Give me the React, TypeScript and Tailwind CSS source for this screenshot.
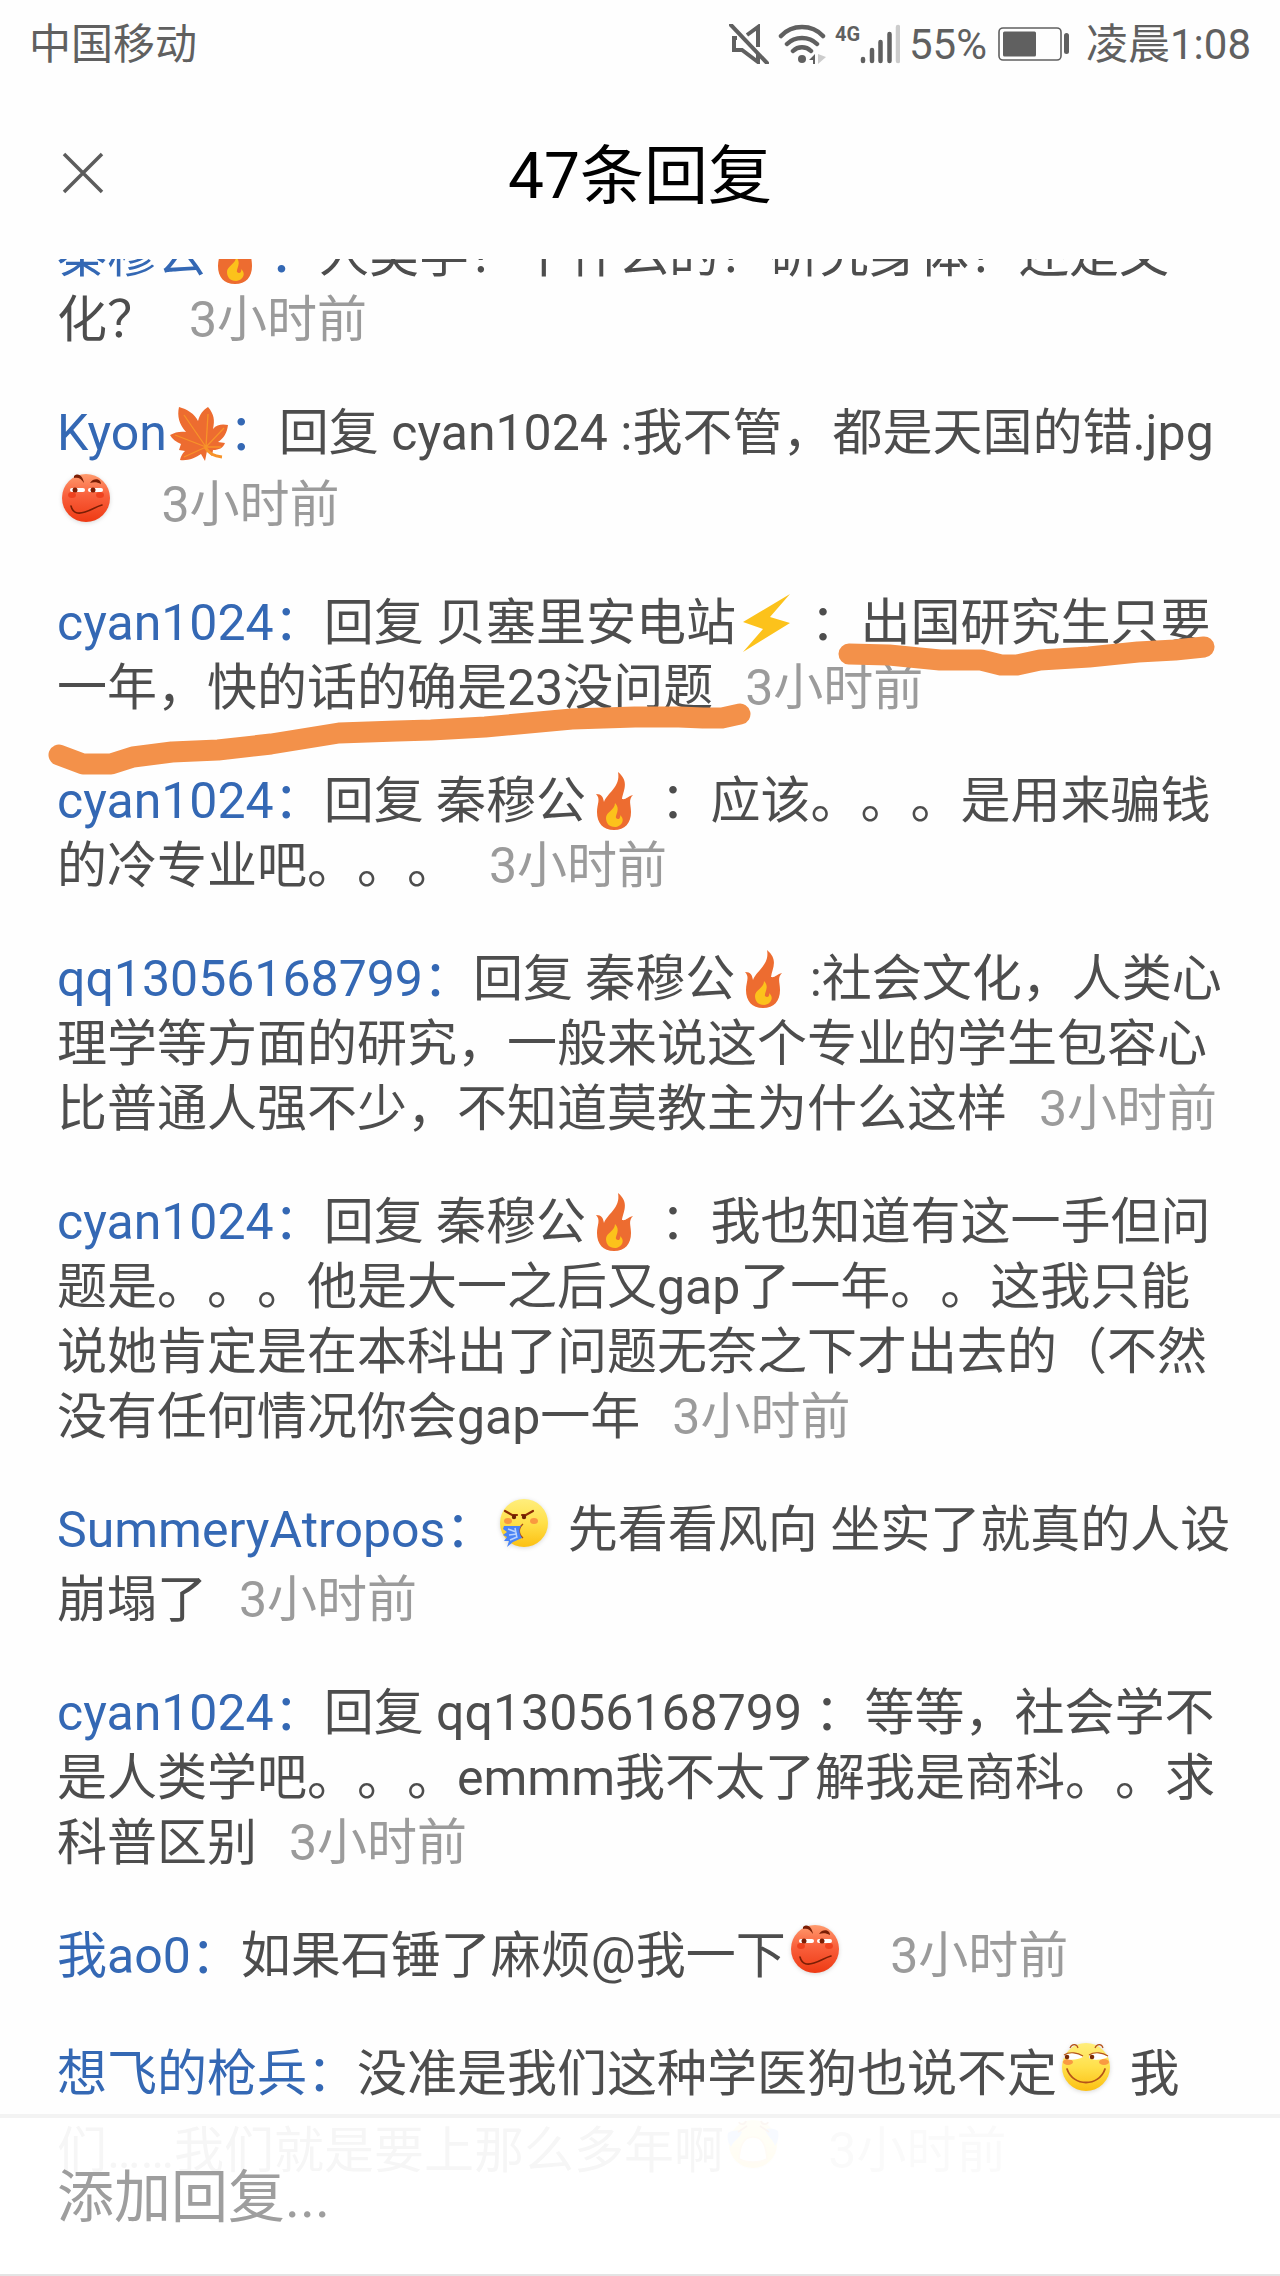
import type { ReactNode } from "react";

const Fire = () => (
  <svg viewBox="0 0 62 58" className="inline-block h-[58px] w-[62px] align-[-12px]" role="img" aria-label="火">
    <path fill="#ed6c30" d="M32 0c12 10 5 19 4 27 4 1 6-3 11-4-5 5-2 9-2 17 0 11-6 18-17 18s-17-7-17-18c0-8 4-13-1-18 6 0 7 3 8 8 3-9 17-15 14-30z" />
    <path fill="#fcc21b" d="M29 31c6 6 0 12 1 15 3 3 5-1 4-3 6 5 1 12-5 12-6 0-9-4-9-9 0-6 9-8 9-15z" />
  </svg>
);

const Bolt = () => (
  <svg viewBox="0 0 62 58" className="inline-block h-[58px] w-[62px] align-[-12px]" role="img" aria-label="闪电">
    <path fill="#fcc21b" d="M54 0 7 28l20 7L7 58l47-29-20-6z" />
  </svg>
);

const Leaf = () => (
  <svg viewBox="0 0 62 58" className="inline-block h-[58px] w-[62px] align-[-12px]" role="img" aria-label="枫叶">
    <path fill="#ed6c30" d="M12 3C20 5 28 10 31 17 33 10 36 6 41 3 47 10 48 16 46 25 50 20 56 20 61 21 60 29 57 34 51 38L58 39C56 44 52 46 46 46L45 52 40 47 38 57 34 50C28 54 21 57 13 56 14 52 15 50 18 47L12 46 14 40C9 38 5 35 3 31 8 28 14 27 19 28 12 20 10 12 12 3z" />
    <path fill="none" stroke="#f79329" strokeWidth="1.3" d="M39 43 17 11M39 43 41 10M39 43 57 24M39 43 8 31M39 43 17 53M39 43h15" />
    <path fill="none" stroke="#f79329" strokeWidth="3" d="M38 43c4 7 9 9 17 10" />
  </svg>
);

type FaceKind = "red" | "spit" | "grin" | "cry";

const faces: Record<FaceKind, ReactNode> = {
  red: (
    <>
      <circle cx="29" cy="25" r="24" fill="url(#redFace)" />
      <path fill="#7a1e05" d="M17 3c5-4 9 1 10 7-3-5-6-6-10-5zM33 10c4-6 11-4 11 1-4-2-7-2-11-1z" />
      <rect x="13" y="15" width="15" height="4" rx="2" fill="#fff" />
      <rect x="31" y="15" width="15" height="4" rx="2" fill="#fff" />
      <circle cx="18" cy="17" r="2.5" fill="#7a1e05" />
      <circle cx="36" cy="17" r="2.5" fill="#7a1e05" />
      <ellipse cx="15" cy="22" rx="4" ry="3" fill="#e93412" opacity=".7" />
      <ellipse cx="43" cy="22" rx="4" ry="3" fill="#e93412" opacity=".7" />
      <path fill="none" stroke="#7a1e05" strokeWidth="1.6" strokeLinecap="round" d="M14 33c2 8 8 8 14 6 7-2 10-5 17-7" />
    </>
  ),
  spit: (
    <>
      <circle cx="29" cy="25" r="24" fill="url(#yellowFace)" />
      <ellipse cx="13" cy="23" rx="4" ry="3" fill="#f77b3a" opacity=".7" />
      <ellipse cx="39" cy="23" rx="4" ry="3" fill="#f77b3a" opacity=".7" />
      <path fill="none" stroke="#8a2c05" strokeWidth="2.2" strokeLinecap="round" d="m10 13 7 4 5 0M38 13l-7 4-4 0" />
      <circle cx="19" cy="19" r="2.2" fill="#6b2205" />
      <circle cx="29" cy="19" r="2.2" fill="#6b2205" />
      <path fill="none" stroke="#a5481b" strokeWidth="1.5" d="M28 26c-5 4-5 10 0 14" />
      <path fill="#4a83f5" d="M9 28h17c-3 4-1 9 1 12l-9 4-6 5 2-6-5 0 3-4-4-2 4-3-4-3z" />
      <path fill="none" stroke="#b9d2fd" strokeWidth="1.5" d="m13 31 8 3M14 37l8-1M15 42l7-3M20 30l2 10" />
    </>
  ),
  grin: (
    <>
      <circle cx="29" cy="25" r="24" fill="url(#yellowFace)" />
      <ellipse cx="11" cy="20" rx="5" ry="3" fill="#f77b3a" opacity=".7" />
      <ellipse cx="47" cy="20" rx="5" ry="3" fill="#f77b3a" opacity=".7" />
      <path fill="#fff" d="M7 14c6-5 14-3 19 1-6 3-13 4-19 1zM32 14c6-5 14-3 19 1-6 3-13 4-19 1z" />
      <path fill="none" stroke="#b5541a" strokeWidth="1.2" d="M13 6c2-5 7-4 8 0M38 6c2-5 7-4 8 0M7 13c6-4 14-2 19 1M32 13c6-4 14-2 19 1" />
      <circle cx="10" cy="15" r="2.3" fill="#7a2c05" />
      <circle cx="35" cy="15" r="2.3" fill="#7a2c05" />
      <path fill="none" stroke="#b5541a" strokeWidth="1.8" strokeLinecap="round" d="M10 27c6 18 32 18 38 0" />
    </>
  ),
  cry: (
    <>
      <circle cx="29" cy="25" r="24" fill="url(#yellowFace)" />
      <path fill="#6ba4f5" d="M4 14c5-3 11-3 14-1-2 6-8 8-11 15-3-4-4-9-3-14zM54 12c-5-3-10-3-13-1 2 6 8 9 10 16 3-4 4-9 3-15z" />
      <path fill="#fff" stroke="#f0a83a" strokeWidth="1.5" d="M29 18c11 0 13 11 14 22-8 4-20 4-28 0 1-11 3-22 14-22z" />
      <path fill="none" stroke="#b5541a" strokeWidth="1.8" d="m14 13 9-6M45 13l-9-6M15 3c1 3 6 3 7-1M44 3c-1 3-6 3-7-1" />
    </>
  ),
};

/* Picture emoji are taller than the text line and push it open; in a first line only downwards. */
const Face = ({ kind, label, first = false }: { kind: FaceKind; label: string; first?: boolean }) => (
  <span className={first ? "inline-block pb-[21px] align-[-21px]" : "inline-block pt-[7px] pb-[21px] align-[-21px]"}>
    <svg viewBox="0 0 60 49" className="block h-[49px] w-[60px] overflow-visible drop-shadow-sm" role="img" aria-label={label}>
      {faces[kind]}
    </svg>
  </span>
);

const Name = ({ children }: { children: ReactNode }) => (
  <a href="#" className="text-[#3468b4]">{children}</a>
);

const Comment = ({ children, time = "3小时前", mark }: { children: ReactNode; time?: string; mark?: ReactNode }) => (
  <li className="relative pr-12 pl-[57px]">
    <p>
      {children}
      <time className="ml-8 inline-block text-[#9b9b9b]">{time}</time>
    </p>
    {mark}
  </li>
);

const Marker = () => (
  <svg viewBox="0 0 1280 200" className="pointer-events-none absolute top-0 left-0 h-[200px] w-[1280px]" aria-hidden="true">
    <g fill="none" stroke="#f3914a" strokeWidth="21" strokeLinecap="round" strokeLinejoin="round">
      <path d="M849 63 889 64 940 69H981L1001 74H1017L1040 69 1089 66 1138 61 1175 59 1204 56" />
      <path d="M59 164 83 173H111L133 166 172 161 218 159 271 153 339 142 397 140 431 139 485 136 572 128 635 126H679L703 127H722L740 123" />
    </g>
  </svg>
);

const StatusBar = () => (
  <div className="flex h-[88px] shrink-0 items-center justify-between px-[29px] text-[42px] leading-[48px] text-[#606060]">
    <span className="pt-[2px]">中国移动</span>
    <div className="flex items-center">
      <svg viewBox="0 0 40 40" className="mr-[9px] h-10 w-10" fill="none" stroke="#606060" strokeWidth="4" aria-label="静音">
        <path d="M2 1 38 39" strokeLinecap="round" />
        <path d="M18 11 29 3v20M8 14H5v12h8l16 12V30" />
      </svg>
      <svg viewBox="0 0 48 40" className="mr-[9px] h-10 w-12" fill="none" stroke="#606060" strokeWidth="4.5" strokeLinecap="round" aria-label="无线网络">
        <path d="M3 12c11-12 31-12 42 0M9 20c8-8 22-8 30 0M15 27c5-5 13-5 18 0" />
        <circle cx="24" cy="35" r="4" fill="#606060" stroke="none" />
        <path d="M37 30v10h-2v-4h-4z" fill="#606060" stroke="none" />
        <path d="M40 30v10l8-7z" fill="#ccc" stroke="none" />
      </svg>
      <div className="mr-[9px] flex items-start">
        <span className="text-[20px] leading-[20px] font-bold">4G</span>
        <svg viewBox="0 0 40 40" className="h-10 w-10" strokeWidth="4.5" strokeLinecap="round" stroke="#606060" aria-label="信号">
          <path d="M3 35v2M12 26v11M20.500 18v19M29.500 10v27" />
          <path d="M38 3v34" stroke="#ccc" />
        </svg>
      </div>
      <span className="mr-[9px] pt-[2px]">55%</span>
      <svg viewBox="0 0 74 36" className="mr-4 h-9 w-[74px]" aria-label="电量">
        <rect x="3" y="2" width="62" height="32" rx="4" fill="none" stroke="#606060" strokeWidth="1.6" />
        <rect x="7" y="5.500" width="33" height="25" rx="1.500" fill="#606060" />
        <rect x="68" y="7" width="5" height="21" rx="2.500" fill="#606060" />
      </svg>
      <span className="pt-[2px]">凌晨1:08</span>
    </div>
  </div>
);

export default function App() {
  return (
    <div className="relative flex h-screen flex-col overflow-hidden bg-[#fefefe] font-['Roboto','Noto_Sans_CJK_SC',sans-serif] text-[#4d4d4d] [text-spacing-trim:space-all]" lang="zh-CN">
      <svg className="absolute h-0 w-0" aria-hidden="true">
        <defs>
          <linearGradient id="redFace" x1="0" y1="0" x2="0" y2="1">
            <stop offset="0" stopColor="#ff9b6e" />
            <stop offset=".45" stopColor="#f9603c" />
            <stop offset="1" stopColor="#ee3a14" />
          </linearGradient>
          <linearGradient id="yellowFace" x1="0" y1="0" x2="0" y2="1">
            <stop offset="0" stopColor="#ffee7c" />
            <stop offset=".5" stopColor="#ffe04a" />
            <stop offset="1" stopColor="#fcc012" />
          </linearGradient>
        </defs>
      </svg>
      <StatusBar />
      <header className="grid h-[171px] shrink-0 grid-cols-[1fr_auto_1fr] items-start px-[62px] pt-12">
        <button type="button" aria-label="关闭" className="mt-4 w-fit">
          <svg viewBox="0 0 42 42" className="h-[42px] w-[42px]" fill="none" stroke="#5c5c5c" strokeWidth="3.5">
            <path d="M2 2 40 40M40 2 2 40" />
          </svg>
        </button>
        <h1 className="text-[64px] leading-[82px] text-black">47条回复</h1>
      </header>
      <main className="min-h-0 flex-1 overflow-hidden">
        <ul className="-mt-9 flex flex-col gap-12 text-[50px] leading-[65px]">
          <Comment><Name>秦穆公<Fire />：</Name>人类学？干什么的？研究身体？还是文化？</Comment>
          <Comment><Name>Kyon<Leaf />：</Name>回复 cyan1024 :我不管，都是天国的错.jpg<Face kind="red" label="滑稽" /> </Comment>
          <Comment mark={<Marker />}><Name>cyan1024：</Name>回复 贝塞里安电站<Bolt /> ：出国研究生只要一年，快的话的确是23没问题</Comment>
          <Comment><Name>cyan1024：</Name>回复 秦穆公<Fire /> ：应该。。。是用来骗钱的冷专业吧。。。</Comment>
          <Comment><Name>qq13056168799：</Name>回复 秦穆公<Fire /> :社会文化，人类心理学等方面的研究，一般来说这个专业的学生包容心比普通人强不少，不知道莫教主为什么这样</Comment>
          <Comment><Name>cyan1024：</Name>回复 秦穆公<Fire /> ：我也知道有这一手但问题是。。。他是大一之后又gap了一年。。这我只能说她肯定是在本科出了问题无奈之下才出去的（不然没有任何情况你会gap一年</Comment>
          <Comment><Name>SummeryAtropos：</Name><Face kind="spit" label="喷" first /> 先看看风向 坐实了就真的人设崩塌了</Comment>
          <Comment><Name>cyan1024：</Name>回复 qq13056168799 ：等等，社会学不是人类学吧。。。emmm我不太了解我是商科。。求科普区别</Comment>
          <Comment><Name>我ao0：</Name>如果石锤了麻烦@我一下<Face kind="red" label="滑稽" first /> </Comment>
          <Comment><Name>想飞的枪兵：</Name>没准是我们这种学医狗也说不定<Face kind="grin" label="笑" first /> 我们……我们就是要上那么多年啊<Face kind="cry" label="哭" /> </Comment>
        </ul>
      </main>
      <footer className="absolute inset-x-0 bottom-0 flex h-[162px] items-center border-t-4 border-b-2 border-t-[#f3f3f3] border-b-[#e4e4e4] bg-white/95 px-[57px] pt-1">
        <input type="text" aria-label="添加回复" placeholder="添加回复..." className="w-full bg-transparent text-[57px] leading-[72px] outline-none placeholder:text-[#9e9e9e]" />
      </footer>
    </div>
  );
}
